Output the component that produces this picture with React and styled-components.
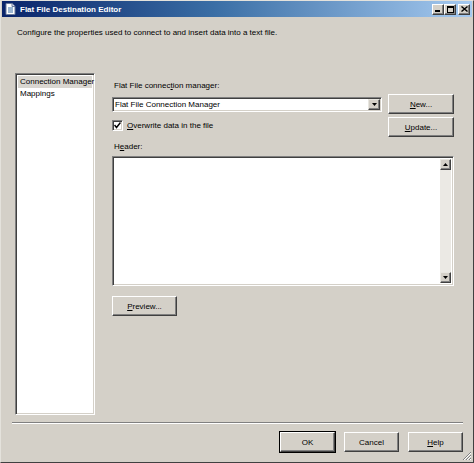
import styled, { createGlobalStyle } from "styled-components";

const GlobalStyle = createGlobalStyle`
  html, body {
    margin: 0;
    padding: 0;
    background: #d4d0c8;
  }
  body {
    font-family: "Liberation Sans", Arial, sans-serif;
    font-size: 8px;
    color: #000;
  }
`;

const Window = styled.div`
  width: 474px;
  height: 463px;
  box-sizing: border-box;
  background: #d4d0c8;
  border-top: 1px solid #e4e2dc;
  border-left: 1px solid #e4e2dc;
  border-right: 1px solid #404040;
  border-bottom: 1px solid #404040;
  display: flex;
  flex-direction: column;
  position: relative;
  overflow: hidden;
`;

const TitleBar = styled.div`
  height: 16px;
  margin: 0 1px;
  background: linear-gradient(to right, #0a246a 0%, #3a6ea5 45%, #a6caf0 100%);
  display: flex;
  align-items: center;
  padding-left: 3px;
  gap: 4px;
`;

const TitleText = styled.span`
  flex: 1;
  color: #fff;
  font-weight: bold;
  font-size: 8px;
`;

const Caption = styled.div`
  display: flex;
  padding-right: 2px;
`;

const CaptionButton = styled.div`
  width: 12px;
  height: 11px;
  box-sizing: border-box;
  background: #d4d0c8;
  border-top: 1px solid #fff;
  border-left: 1px solid #fff;
  border-right: 1px solid #404040;
  border-bottom: 1px solid #404040;
  box-shadow: inset -1px -1px 0 #808080;
  display: flex;
  align-items: center;
  justify-content: center;
  margin-left: ${(p) => (p.$gap ? "2px" : "0")};
`;

const Description = styled.div`
  padding: 11px 0 0 16px;
  height: 56px;
  box-sizing: border-box;
`;

const Main = styled.div`
  display: flex;
  padding-left: 14px;
  gap: 17px;
`;

const Sunken = styled.div`
  box-sizing: border-box;
  background: #fff;
  border-top: 1px solid #808080;
  border-left: 1px solid #808080;
  border-right: 1px solid #fff;
  border-bottom: 1px solid #fff;
  box-shadow: inset 1px 1px 0 #404040, inset -1px -1px 0 #d4d0c8;
`;

const ListBox = styled(Sunken)`
  width: 80px;
  height: 342px;
  padding: 2px;
`;

const ListItem = styled.div`
  height: 12px;
  line-height: 12px;
  padding-left: 2px;
  background: ${(p) => (p.$selected ? "#d9d6d0" : "transparent")};
  white-space: nowrap;
`;

const Panel = styled.div`
  display: flex;
  flex-direction: column;
  padding-top: 7px;
`;

const TopGrid = styled.div`
  display: grid;
  grid-template-columns: 270px 66px;
  column-gap: 6px;
  row-gap: 3px;
  align-items: center;
`;

const Label = styled.div`
  padding-left: 2px;
  height: 11px;
  line-height: 11px;
`;

const Combo = styled(Sunken)`
  height: 15px;
  display: flex;
  align-items: center;
  padding-left: 2px;
  justify-content: space-between;
`;

const DropButton = styled.div`
  width: 12px;
  height: 11px;
  box-sizing: border-box;
  margin-right: 1px;
  background: #d4d0c8;
  border-top: 1px solid #e8e6e0;
  border-left: 1px solid #e8e6e0;
  border-right: 1px solid #404040;
  border-bottom: 1px solid #404040;
  box-shadow: inset -1px -1px 0 #808080;
  display: flex;
  align-items: center;
  justify-content: center;
`;

const Button = styled.button`
  width: ${(p) => p.$w || 66}px;
  height: ${(p) => p.$h || 20}px;
  padding: 0;
  font-family: inherit;
  font-size: 8px;
  color: #000;
  background: #d4d0c8;
  box-sizing: border-box;
  border-top: 1px solid #fff;
  border-left: 1px solid #fff;
  border-right: 1px solid #404040;
  border-bottom: 1px solid #404040;
  box-shadow: inset -1px -1px 0 #808080;
  outline: ${(p) => (p.$default ? "1px solid #000" : "none")};
  outline-offset: 0;
`;

const CheckRow = styled.div`
  display: flex;
  align-items: center;
  gap: 4px;
  margin-top: -3px;
`;

const CheckBox = styled(Sunken)`
  width: 11px;
  height: 11px;
  display: flex;
  align-items: center;
  justify-content: center;
`;

const HeaderLabel = styled(Label)`
  margin-top: 4px;
  margin-bottom: 4px;
`;

const TextArea = styled(Sunken)`
  width: 342px;
  height: 130px;
  display: flex;
  justify-content: flex-end;
  padding: 2px;
`;

const ScrollBar = styled.div`
  width: 11px;
  display: flex;
  flex-direction: column;
  justify-content: space-between;
  background: #ebe9e4;
`;

const ArrowButton = styled(DropButton)`
  width: 11px;
  margin: 0;
`;

const PreviewButton = styled(Button)`
  margin-top: 10px;
`;

const Footer = styled.div`
  margin-top: auto;
  padding: 0 10px 10px 11px;
  display: flex;
  flex-direction: column;
  align-items: flex-end;
`;

const Separator = styled.div`
  align-self: stretch;
  height: 0;
  border-top: 1px solid #808080;
  border-bottom: 1px solid #fff;
  margin-bottom: 8px;
`;

const ButtonRow = styled.div`
  display: flex;
  gap: 9px;
`;

const Grip = styled.svg`
  position: absolute;
  right: 1px;
  bottom: 1px;
`;

const Triangle = () => (
  <svg width="5" height="3" viewBox="0 0 5 3">
    <polygon points="0,0 5,0 2.5,3" fill="#000" />
  </svg>
);

const UpTriangle = () => (
  <svg width="5" height="3" viewBox="0 0 5 3">
    <polygon points="0,3 5,3 2.5,0" fill="#000" />
  </svg>
);

export default function App() {
  return (
    <>
      <GlobalStyle />
      <Window>
        <TitleBar>
          <svg width="11" height="12" viewBox="0 0 11 12">
            <path d="M1 0.5h6l3 3v8H1z" fill="#fff" stroke="#6b7b9c" />
            <path d="M7 0.5v3h3" fill="#dde" stroke="#6b7b9c" />
            <path d="M3 5h5M3 7h5M3 9h5" stroke="#3a6ea5" />
          </svg>
          <TitleText>Flat File Destination Editor</TitleText>
          <Caption>
            <CaptionButton>
              <svg width="6" height="6" viewBox="0 0 6 6">
                <rect x="0" y="4" width="5" height="2" fill="#000" />
              </svg>
            </CaptionButton>
            <CaptionButton>
              <svg width="7" height="7" viewBox="0 0 7 7">
                <rect x="0.5" y="0.5" width="6" height="6" fill="none" stroke="#000" />
                <rect x="0" y="0" width="7" height="2" fill="#000" />
              </svg>
            </CaptionButton>
            <CaptionButton $gap>
              <svg width="7" height="6" viewBox="0 0 7 6">
                <path d="M0.5 0.5l6 5M6.5 0.5l-6 5" stroke="#000" strokeWidth="1.4" />
              </svg>
            </CaptionButton>
          </Caption>
        </TitleBar>
        <Description>
          Configure the properties used to connect to and insert data into a text file.
        </Description>
        <Main>
          <ListBox>
            <ListItem $selected>Connection Manager</ListItem>
            <ListItem>Mappings</ListItem>
          </ListBox>
          <Panel>
            <TopGrid>
              <Label>
                Flat File connec<u>t</u>ion manager:
              </Label>
              <div />
              <Combo>
                <span>Flat File Connection Manager</span>
                <DropButton>
                  <Triangle />
                </DropButton>
              </Combo>
              <Button>
                <u>N</u>ew...
              </Button>
              <CheckRow>
                <CheckBox>
                  <svg width="7" height="7" viewBox="0 0 7 7">
                    <path d="M0.5 3l2 2.5 4-5" fill="none" stroke="#000" strokeWidth="1.5" />
                  </svg>
                </CheckBox>
                <span>
                  <u>O</u>verwrite data in the file
                </span>
              </CheckRow>
              <Button>
                <u>U</u>pdate...
              </Button>
            </TopGrid>
            <HeaderLabel>
              H<u>e</u>ader:
            </HeaderLabel>
            <TextArea>
              <ScrollBar>
                <ArrowButton>
                  <UpTriangle />
                </ArrowButton>
                <ArrowButton>
                  <Triangle />
                </ArrowButton>
              </ScrollBar>
            </TextArea>
            <PreviewButton $w={65}>
              <u>P</u>review...
            </PreviewButton>
          </Panel>
        </Main>
        <Footer>
          <Separator />
          <ButtonRow>
            <Button $w={55} $default>
              OK
            </Button>
            <Button $w={55}>Cancel</Button>
            <Button $w={55}>
              <u>H</u>elp
            </Button>
          </ButtonRow>
        </Footer>
        <Grip width="11" height="11" viewBox="0 0 11 11">
          <path d="M10 2L2 10M10 5L5 10M10 8L8 10" stroke="#808080" />
          <path d="M10 3L3 10M10 6L6 10M10 9L9 10" stroke="#fff" />
        </Grip>
      </Window>
    </>
  );
}
